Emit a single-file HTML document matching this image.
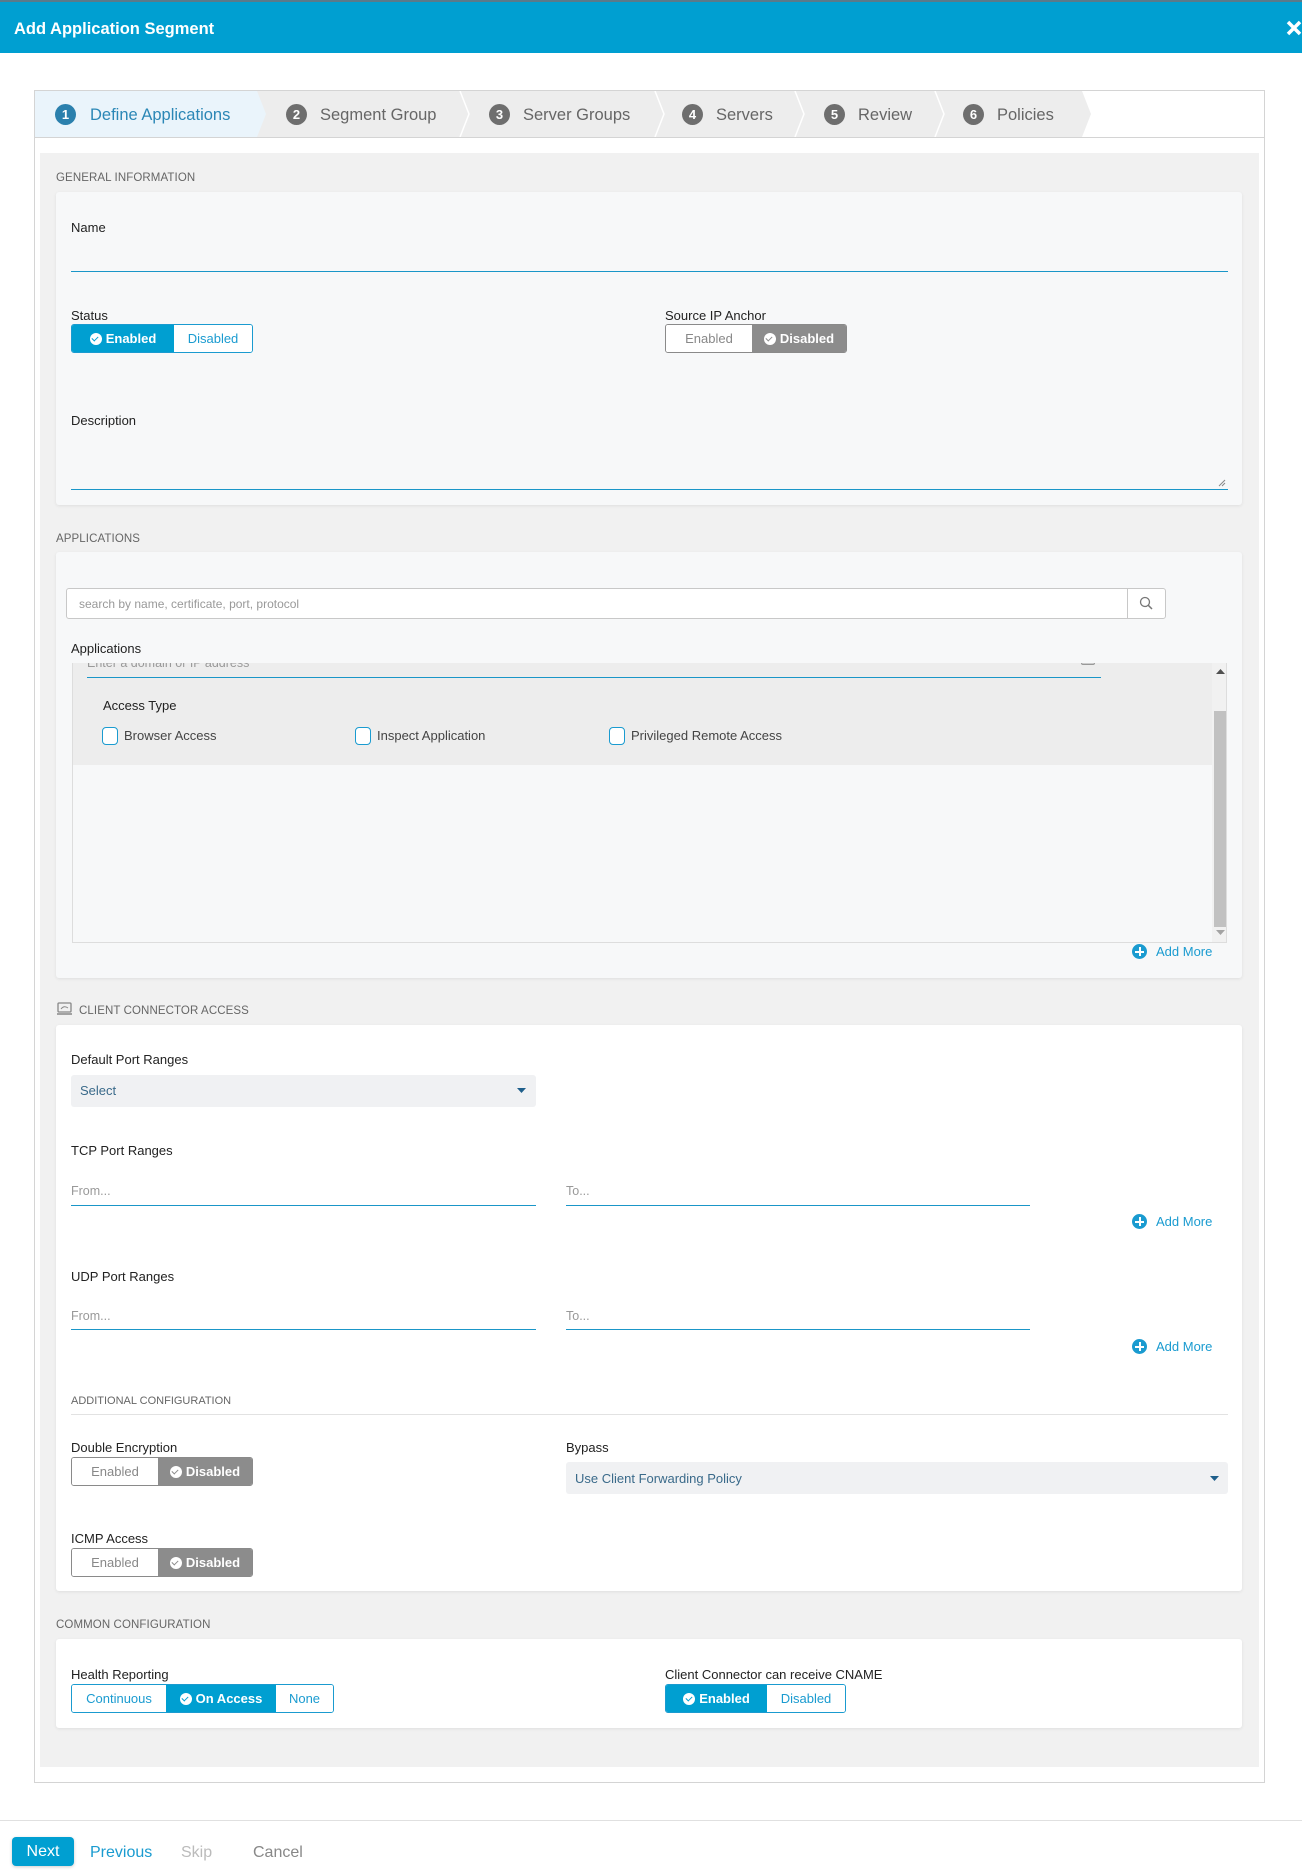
<!DOCTYPE html>
<html><head><meta charset="utf-8"><style>
*{box-sizing:border-box;margin:0;padding:0}
body{width:1302px;height:1875px;position:relative;background:#fff;font-family:"Liberation Sans",Arial,sans-serif;overflow:hidden;color:#222}
.a{position:absolute}
.t{position:absolute;line-height:20px;white-space:nowrap}
.lbl{font-size:13px;color:#222}
.sec{font-size:11.5px;color:#666;letter-spacing:.1px}
.tg{position:absolute;display:flex;height:29px;border-radius:3px;overflow:hidden;font-size:13px}
.tg div{display:flex;align-items:center;justify-content:center;height:100%}
.chk{display:inline-block;width:12px;height:12px;border-radius:50%;background:#fff;margin-right:4px;position:relative}
.chk:after{content:"";position:absolute;left:3.5px;top:2px;width:3px;height:5px;border:solid currentColor;border-width:0 1.6px 1.6px 0;transform:rotate(45deg)}
.line{position:absolute;height:1px;background:#1a96c8}
.ph{font-size:12.5px;color:#999}
.addm{position:absolute;font-size:13px;color:#1a9bd0;display:flex;align-items:center}
.plus{width:15px;height:15px;border-radius:50%;background:#1a9bd0;position:relative;margin-right:9px}
.plus:before{content:"";position:absolute;left:3px;top:6.5px;width:9px;height:2px;background:#fff}
.plus:after{content:"";position:absolute;left:6.5px;top:3px;width:2px;height:9px;background:#fff}
.cb{position:absolute;width:16px;height:18px;border:1.5px solid #1a9bd0;border-radius:4px;background:#fff}
.num{position:absolute;width:21px;height:21px;border-radius:50%;color:#fff;font-size:13px;font-weight:bold;text-align:center;line-height:21px}
.tab{position:absolute;font-size:16.5px;color:#666;line-height:20px}
</style></head><body>
<div class="a" style="left:0;top:0;width:1302px;height:53px;background:#009fd1;border-top:2px solid #5a7a8a"></div>
<div class="t" style="left:14px;top:19px;font-size:16.5px;font-weight:bold;color:#fff">Add Application Segment</div>
<svg class="a" style="left:1286px;top:20px" width="16" height="16" viewBox="0 0 16 16"><path d="M2 2L14 14M14 2L2 14" stroke="#fff" stroke-width="3.5"/></svg>

<div class="a" style="left:34px;top:90px;width:1231px;height:1693px;border:1px solid #d4d4d4"></div>
<svg class="a" style="left:35px;top:91px" width="1229" height="47">
<rect x="0" y="0" width="1229" height="46" fill="#fff"/>
<polygon points="1047,0 1056,23 1047,46 0,46 0,0" fill="#ededed"/>
<polygon points="222,0 231,23 222,46 0,46 0,0" fill="#eaf4fb"/>
<g fill="none" stroke="#fff" stroke-width="1.5">
<polyline points="425,0 434,23 425,46"/>
<polyline points="620,0 629,23 620,46"/>
<polyline points="760,0 769,23 760,46"/>
<polyline points="900,0 909,23 900,46"/>
</g>
<line x1="0" y1="46.5" x2="1229" y2="46.5" stroke="#d4d4d4"/>
</svg>
<div class="num" style="left:55px;top:104px;background:#2b80ad">1</div>
<div class="tab" style="left:90px;top:105px;color:#2b87b6">Define Applications</div>
<div class="num" style="left:286px;top:104px;background:#6e6e6e">2</div>
<div class="tab" style="left:320px;top:105px">Segment Group</div>
<div class="num" style="left:489px;top:104px;background:#6e6e6e">3</div>
<div class="tab" style="left:523px;top:105px">Server Groups</div>
<div class="num" style="left:682px;top:104px;background:#6e6e6e">4</div>
<div class="tab" style="left:716px;top:105px">Servers</div>
<div class="num" style="left:824px;top:104px;background:#6e6e6e">5</div>
<div class="tab" style="left:858px;top:105px">Review</div>
<div class="num" style="left:963px;top:104px;background:#6e6e6e">6</div>
<div class="tab" style="left:997px;top:105px">Policies</div>

<div class="a" style="left:40px;top:153px;width:1219px;height:1614px;background:#f1f1f1"></div>

<div class="t sec" style="left:56px;top:168px">GENERAL INFORMATION</div>
<div class="a" style="left:56px;top:192px;width:1186px;height:313px;background:#f7f8f9;border-radius:3px;box-shadow:0 1px 3px rgba(0,0,0,.08)"></div>
<div class="t lbl" style="left:71px;top:218px">Name</div>
<div class="line" style="left:71px;top:271px;width:1157px"></div>
<div class="t lbl" style="left:71px;top:306px">Status</div>
<div class="tg" style="left:71px;top:324px;border:1px solid #1a9bd0">
 <div style="width:102px;background:#009fd1;color:#fff;font-weight:bold"><span class="chk" style="color:#009fd1"></span>Enabled</div>
 <div style="width:78px;background:#fff;color:#1a9bd0">Disabled</div></div>
<div class="t lbl" style="left:665px;top:306px">Source IP Anchor</div>
<div class="tg" style="left:665px;top:324px;border:1px solid #8a8a8a">
 <div style="width:86px;background:#fff;color:#888">Enabled</div>
 <div style="width:94px;background:#8c8c8c;color:#fff;font-weight:bold"><span class="chk" style="color:#8c8c8c"></span>Disabled</div></div>
<div class="t lbl" style="left:71px;top:411px">Description</div>
<div class="line" style="left:71px;top:489px;width:1157px"></div>
<svg class="a" style="left:1218px;top:479px" width="8" height="8"><path d="M1 7L7 1M4 7L7 4" stroke="#888"/></svg>

<div class="t sec" style="left:56px;top:529px">APPLICATIONS</div>
<div class="a" style="left:56px;top:552px;width:1186px;height:426px;background:#f7f8f9;border-radius:3px;box-shadow:0 1px 3px rgba(0,0,0,.08)"></div>
<div class="a" style="left:66px;top:588px;width:1100px;height:31px;border:1px solid #c8c8c8;border-radius:3px;background:#fff"></div>
<div class="a" style="left:1127px;top:589px;width:1px;height:29px;background:#c8c8c8"></div>
<svg class="a" style="left:1139px;top:596px" width="15" height="15"><circle cx="6" cy="6" r="4.5" fill="none" stroke="#777" stroke-width="1.3"/><path d="M9.3 9.3L13 13" stroke="#777" stroke-width="1.5"/></svg>
<div class="t" style="left:79px;top:594px;font-size:12px;color:#999">search by name, certificate, port, protocol</div>
<div class="t lbl" style="left:71px;top:639px">Applications</div>
<div class="a" style="left:72px;top:663px;width:1155px;height:280px;border:1px solid #ddd;border-top:none;background:#f7f8f9;overflow:hidden">
 <div class="a" style="left:0;top:0;width:1139px;height:102px;background:#ededed"></div>
 <div class="t ph" style="left:14px;top:-10px">Enter a domain or IP address</div>
 <div class="a" style="left:1008px;top:-4px;width:14px;height:6px;border:1px solid #999;border-radius:2px;background:#ccc"></div>
 <div class="line" style="left:14px;top:14px;width:1014px"></div>
 <div class="t lbl" style="left:30px;top:33px">Access Type</div>
 <div class="cb" style="left:29px;top:64px"></div><div class="t lbl" style="left:51px;top:63px;color:#444">Browser Access</div>
 <div class="cb" style="left:282px;top:64px"></div><div class="t lbl" style="left:304px;top:63px;color:#444">Inspect Application</div>
 <div class="cb" style="left:536px;top:64px"></div><div class="t lbl" style="left:558px;top:63px;color:#444">Privileged Remote Access</div>
 <div class="a" style="left:1139px;top:0;width:16px;height:280px;background:#f1f1f1"></div>
 <div class="a" style="left:1141px;top:48px;width:13px;height:216px;background:#c1c1c1"></div>
 <svg class="a" style="left:1143px;top:6px" width="9" height="6"><path d="M0 5L4.5 0L9 5Z" fill="#505050"/></svg>
 <svg class="a" style="left:1143px;top:267px" width="9" height="6"><path d="M0 0L4.5 5L9 0Z" fill="#a3a3a3"/></svg>
</div>
<div class="addm" style="left:1132px;top:944px"><span class="plus"></span>Add More</div>

<svg class="a" style="left:57px;top:1002px" width="15" height="13"><rect x="1" y="1" width="13" height="9" rx="1" fill="none" stroke="#888" stroke-width="1.3"/><path d="M0 12H15" stroke="#888" stroke-width="1.5"/><path d="M4 7Q7 3 11 6" fill="none" stroke="#888"/></svg>
<div class="t sec" style="left:79px;top:1001px">CLIENT CONNECTOR ACCESS</div>
<div class="a" style="left:56px;top:1025px;width:1186px;height:566px;background:#fff;border-radius:3px;box-shadow:0 1px 3px rgba(0,0,0,.08)"></div>
<div class="t lbl" style="left:71px;top:1050px">Default Port Ranges</div>
<div class="a" style="left:71px;top:1075px;width:465px;height:32px;background:#f0f1f3;border-radius:3px"></div>
<div class="t" style="left:80px;top:1081px;font-size:13px;color:#3a6a8a">Select</div>
<svg class="a" style="left:517px;top:1088px" width="9" height="5"><path d="M0 0H9L4.5 5Z" fill="#1f5f8b"/></svg>

<div class="t lbl" style="left:71px;top:1141px">TCP Port Ranges</div>
<div class="t ph" style="left:71px;top:1181px">From...</div>
<div class="line" style="left:71px;top:1205px;width:465px"></div>
<div class="t ph" style="left:566px;top:1181px">To...</div>
<div class="line" style="left:566px;top:1205px;width:464px"></div>
<div class="addm" style="left:1132px;top:1214px"><span class="plus"></span>Add More</div>

<div class="t lbl" style="left:71px;top:1267px">UDP Port Ranges</div>
<div class="t ph" style="left:71px;top:1306px">From...</div>
<div class="line" style="left:71px;top:1329px;width:465px"></div>
<div class="t ph" style="left:566px;top:1306px">To...</div>
<div class="line" style="left:566px;top:1329px;width:464px"></div>
<div class="addm" style="left:1132px;top:1339px"><span class="plus"></span>Add More</div>

<div class="t" style="left:71px;top:1391px;font-size:11px;color:#666">ADDITIONAL CONFIGURATION</div>
<div class="a" style="left:71px;top:1414px;width:1157px;height:1px;background:#e2e2e2"></div>
<div class="t lbl" style="left:71px;top:1438px">Double Encryption</div>
<div class="tg" style="left:71px;top:1457px;height:29px;border:1px solid #8a8a8a">
 <div style="width:86px;background:#fff;color:#888">Enabled</div>
 <div style="width:94px;background:#8c8c8c;color:#fff;font-weight:bold"><span class="chk" style="color:#8c8c8c"></span>Disabled</div></div>
<div class="t lbl" style="left:566px;top:1438px">Bypass</div>
<div class="a" style="left:566px;top:1462px;width:662px;height:32px;background:#f0f1f3;border-radius:3px"></div>
<div class="t" style="left:575px;top:1469px;font-size:13px;color:#3a6a8a">Use Client Forwarding Policy</div>
<svg class="a" style="left:1210px;top:1476px" width="9" height="5"><path d="M0 0H9L4.5 5Z" fill="#1f5f8b"/></svg>
<div class="t lbl" style="left:71px;top:1529px">ICMP Access</div>
<div class="tg" style="left:71px;top:1548px;height:29px;border:1px solid #8a8a8a">
 <div style="width:86px;background:#fff;color:#888">Enabled</div>
 <div style="width:94px;background:#8c8c8c;color:#fff;font-weight:bold"><span class="chk" style="color:#8c8c8c"></span>Disabled</div></div>

<div class="t sec" style="left:56px;top:1615px">COMMON CONFIGURATION</div>
<div class="a" style="left:56px;top:1639px;width:1186px;height:89px;background:#fff;border-radius:3px;box-shadow:0 1px 3px rgba(0,0,0,.08)"></div>
<div class="t lbl" style="left:71px;top:1665px">Health Reporting</div>
<div class="tg" style="left:71px;top:1684px;height:29px;border:1px solid #1a9bd0">
 <div style="width:94px;background:#fff;color:#1a9bd0">Continuous</div>
 <div style="width:110px;background:#009fd1;color:#fff;font-weight:bold"><span class="chk" style="color:#009fd1"></span>On Access</div>
 <div style="width:57px;background:#fff;color:#1a9bd0">None</div></div>
<div class="t lbl" style="left:665px;top:1665px">Client Connector can receive CNAME</div>
<div class="tg" style="left:665px;top:1684px;height:29px;border:1px solid #1a9bd0">
 <div style="width:101px;background:#009fd1;color:#fff;font-weight:bold"><span class="chk" style="color:#009fd1"></span>Enabled</div>
 <div style="width:78px;background:#fff;color:#1a9bd0">Disabled</div></div>

<div class="a" style="left:0;top:1820px;width:1302px;height:1px;background:#e0e0e0"></div>
<div class="a" style="left:12px;top:1837px;width:62px;height:29px;background:#009fd1;border-radius:4px;box-shadow:0 1px 3px rgba(0,0,0,.2)"></div>
<div class="t" style="left:12px;top:1842px;width:62px;text-align:center;font-size:16px;color:#fff">Next</div>
<div class="t" style="left:90px;top:1843px;font-size:16px;color:#1a9bd0">Previous</div>
<div class="t" style="left:181px;top:1843px;font-size:16px;color:#bbb">Skip</div>
<div class="t" style="left:253px;top:1843px;font-size:16px;color:#888">Cancel</div>
</body></html>
